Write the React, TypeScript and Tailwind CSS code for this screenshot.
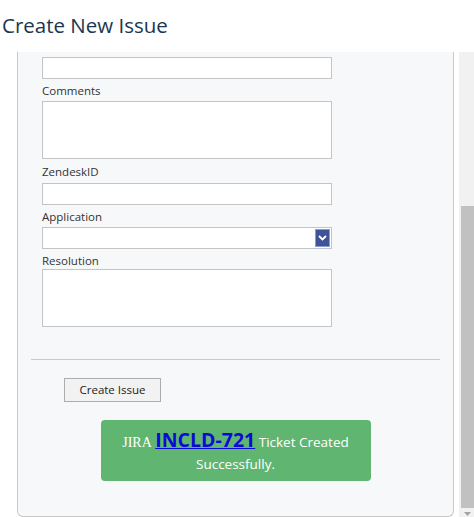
const labelCls = "block pt-[4px] leading-[16px] text-[11.5px] text-[#333333]";
const boxCls = "block w-[290px] border border-[#c4c4c4] bg-white";

export default function App() {
  return (
    <div
      className="flex h-[517px] w-[474px] flex-col overflow-hidden bg-white"
      style={{ fontFamily: '"Open Sans", "Noto Sans", sans-serif' }}
    >
      <div className="flex h-[53px] items-center pl-[2px] pb-[1px]">
        <h1 className="text-[20.5px] leading-none text-[#1b3650]">Create New Issue</h1>
      </div>

      <div className="flex flex-1">
        {/* form panel, shown scrolled to its bottom */}
        <div className="flex-1">
          <div className="ml-[17px] w-[437px] rounded-b-md border border-t-0 border-[#c8c8c8] bg-[#f7f8fa] pt-[5px] pb-[35px]">
            <div className="pl-[24px]">
              <div className={`${boxCls} h-[22px]`} />

              <span className={`${labelCls} h-[22px]`}>Comments</span>
              <div className={`${boxCls} h-[58px]`} />

              <span className={`${labelCls} h-[24px] pt-[5px]`}>ZendeskID</span>
              <div className={`${boxCls} h-[22px]`} />

              <span className={`${labelCls} h-[22px]`}>Application</span>
              <div className="flex h-[22px] w-[290px] items-center justify-end border border-[#c4c4c4] bg-white pr-[1px]">
                <div className="flex h-[18px] w-[15px] items-center justify-center border border-[#8a9bd0] bg-[#3f5398]">
                  <svg width="9" height="6" viewBox="0 0 9 6">
                    <path d="M1 1 L4.5 4.5 L8 1" fill="none" stroke="white" strokeWidth="1.8" />
                  </svg>
                </div>
              </div>

              <span className={`${labelCls} h-[20px] pt-[3px]`}>Resolution</span>
              <div className={`${boxCls} h-[58px]`} />
            </div>

            <div className="mx-[13px] mt-[32px] border-t border-[#c8c8c8]" />

            <div className="mt-[16px] pl-[46px]">
              <button className="h-[24px] w-[97px] border border-[#adadad] bg-[#f2f2f2] text-[11.5px] text-[#222222]">
                Create Issue
              </button>
            </div>

            <div className="mt-[18px] flex justify-center">
              <div className="flex h-[61px] w-[270px] flex-col items-center justify-center rounded-[4px] bg-[#60b671] pt-[3px] text-center text-[13.5px] leading-[22px] text-white">
                <div>
                  <span className="text-[14px]" style={{ fontFamily: '"Liberation Serif", serif' }}>
                    JIRA
                  </span>{" "}
                  <a href="#" className="text-[19.5px] font-bold leading-[20px] text-[#0a0ad6] underline">
                    INCLD-721
                  </a>{" "}
                  Ticket Created
                </div>
                <div className="-mt-[1px]">Successfully.</div>
              </div>
            </div>
          </div>
        </div>

        {/* scrollbar */}
        <div className="flex w-[15px] flex-col bg-[#f1f1f1] pl-[2px]">
          <div className="h-[154px]" />
          <div className="flex-1 bg-[#c1c1c1]" />
          <div className="flex h-[9px] items-end justify-center">
            <svg width="7" height="5" viewBox="0 0 7 5">
              <path d="M0 0 L7 0 L3.5 4 Z" fill="#a3a3a3" />
            </svg>
          </div>
        </div>
      </div>
    </div>
  );
}
